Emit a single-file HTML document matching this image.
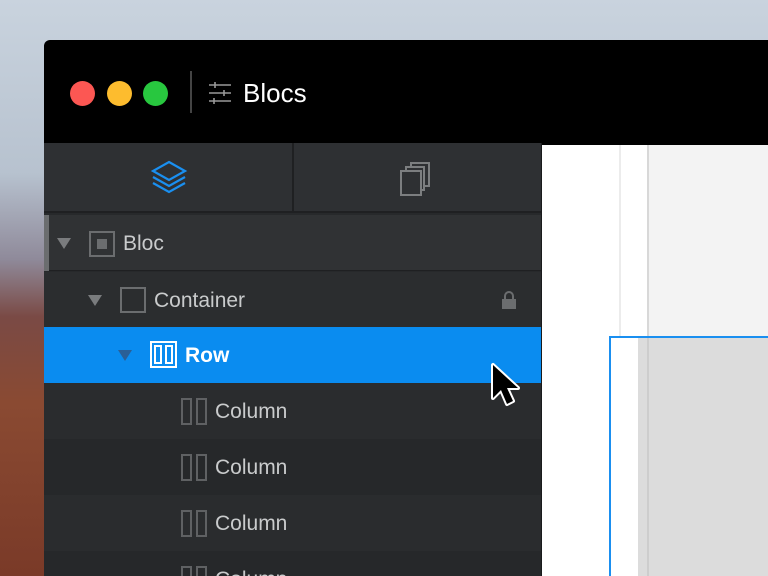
<!DOCTYPE html>
<html><head><style>
*{margin:0;padding:0;box-sizing:border-box}
html,body{width:768px;height:576px;overflow:hidden}
body{position:relative;font-family:"Liberation Sans",sans-serif;
background:linear-gradient(180deg,#c9d3de 0%,#b7c2cf 30%,#8f8a9a 45%,#7a4a45 55%,#8a4a32 70%,#7a3a28 100%)}
.win{position:absolute;left:44px;top:40px;width:724px;height:536px;background:#000;border-radius:6px 0 0 0;overflow:hidden}
.dot{position:absolute;top:41px;width:25px;height:25px;border-radius:50%}
.side{position:absolute;left:0;top:103px;width:497px;height:433px;background:#27292b;overflow:hidden}
.tabs{height:70px;background:#2e3033;border-bottom:2px solid #1f2022;position:relative}
.row{position:absolute;left:0;width:497px;height:56px;color:#c9cbcc;font-size:21px}
.row span.t{position:absolute;top:17px}
.tri{position:absolute;width:0;height:0;border-left:7px solid transparent;border-right:7px solid transparent;border-top:11px solid #7a7c7e;top:23px}
.canvas{position:absolute;left:498px;top:105px;width:226px;height:431px;background:#fff;overflow:hidden}
</style></head><body>
<div class="win">
 <div class="dot" style="left:26px;background:#fc5753"></div>
 <div class="dot" style="left:63px;background:#fdbc2e"></div>
 <div class="dot" style="left:99px;background:#28c73f"></div>
 <div style="position:absolute;left:146px;top:31px;width:2px;height:42px;background:#444"></div>
 <svg style="position:absolute;left:164px;top:41px" width="24" height="24" viewBox="0 0 24 24" stroke="#999" stroke-width="1.6"><path d="M1 4H23M1 12H23M1 20H23"/><path d="M7 1V7M16 9V15M6 17V23" stroke-width="1.6"/></svg>
 <div style="position:absolute;left:199px;top:38px;color:#fff;font-size:26px">Blocs</div>
 <div class="side">
  <div class="tabs">
   <div style="position:absolute;left:248px;top:0;width:2px;height:70px;background:#1f2022"></div>
   <svg style="position:absolute;left:106px;top:16px" width="38" height="38" viewBox="0 0 38 38" fill="none" stroke="#1a8ff0" stroke-width="2.2"><path d="M19 3L35 12L19 21L3 12Z"/><path d="M3 18L19 27L35 18"/><path d="M3 24L19 33L35 24"/></svg>
   <svg style="position:absolute;left:354px;top:18px" width="34" height="36" viewBox="0 0 34 36" fill="none" stroke="#7c7e80" stroke-width="2"><rect x="3" y="10" width="20" height="24"/><path d="M8 10V6H26V29H23M13 6V2H31V25H26"/></svg>
  </div>
  <div class="row" style="top:72px;background:#303234;border-bottom:1px solid #1f2022">
   <div style="position:absolute;left:0;top:0;width:5px;height:56px;background:#6b6d6f"></div>
   <div class="tri" style="left:13px"></div>
   <div style="position:absolute;left:45px;top:16px;width:26px;height:26px;border:2px solid #6b6d6f"></div>
   <div style="position:absolute;left:53px;top:24px;width:10px;height:10px;background:#6b6d6f"></div>
   <span class="t" style="left:79px">Bloc</span>
  </div>
  <div class="row" style="top:129px;background:#2b2d2f">
   <div class="tri" style="left:44px"></div>
   <div style="position:absolute;left:76px;top:15px;width:26px;height:26px;border:2px solid #6b6d6f"></div>
   <span class="t" style="left:110px">Container</span>
   <svg style="position:absolute;left:457px;top:18px" width="16" height="20" viewBox="0 0 16 20"><path d="M4 9V6a4 4 0 0 1 8 0v3" fill="none" stroke="#6b6d6f" stroke-width="2"/><rect x="1" y="9" width="14" height="10" fill="#6b6d6f"/></svg>
  </div>
  <div class="row" style="top:184px;background:#0a8cf0;color:#fff;font-weight:bold">
   <div class="tri" style="left:74px;border-top-color:#2a5f96"></div>
   <div style="position:absolute;left:106px;top:14px;width:27px;height:27px;border:2px solid #fff"></div>
   <div style="position:absolute;left:110px;top:18px;width:8px;height:19px;border:2px solid #fff"></div>
   <div style="position:absolute;left:121px;top:18px;width:8px;height:19px;border:2px solid #fff"></div>
   <span class="t" style="left:141px">Row</span>
  </div>
  <div class="row" style="top:240px;background:#2a2c2e"><div style="position:absolute;left:137px;top:15px;width:11px;height:27px;border:2px solid #5f6163"></div><div style="position:absolute;left:152px;top:15px;width:11px;height:27px;border:2px solid #5f6163"></div><span class="t" style="left:171px">Column</span></div>
  <div class="row" style="top:296px;background:#26282a"><div style="position:absolute;left:137px;top:15px;width:11px;height:27px;border:2px solid #5f6163"></div><div style="position:absolute;left:152px;top:15px;width:11px;height:27px;border:2px solid #5f6163"></div><span class="t" style="left:171px">Column</span></div>
  <div class="row" style="top:352px;background:#2a2c2e"><div style="position:absolute;left:137px;top:15px;width:11px;height:27px;border:2px solid #5f6163"></div><div style="position:absolute;left:152px;top:15px;width:11px;height:27px;border:2px solid #5f6163"></div><span class="t" style="left:171px">Column</span></div>
  <div class="row" style="top:408px;background:#26282a"><div style="position:absolute;left:137px;top:15px;width:11px;height:27px;border:2px solid #5f6163"></div><div style="position:absolute;left:152px;top:15px;width:11px;height:27px;border:2px solid #5f6163"></div><span class="t" style="left:171px">Column</span></div>
 </div>
 <div style="position:absolute;left:497px;top:103px;width:1px;height:433px;background:#1a1b1c"></div>
 <div class="canvas">
  <div style="position:absolute;left:77px;top:0;width:2px;height:431px;background:#ececec"></div>
  <div style="position:absolute;left:105px;top:0;width:2px;height:431px;background:#d8d8d8"></div>
  <div style="position:absolute;left:107px;top:0;width:119px;height:431px;background:#f3f3f3"></div>
  <div style="position:absolute;left:67px;top:191px;width:170px;height:250px;border:2px solid #1a8ff0;background:#fff">
   <div style="position:absolute;left:27px;top:0;width:150px;height:250px;background:#dcdcdc"></div>
   <div style="position:absolute;left:36px;top:0;width:2px;height:250px;background:#cdcdcd"></div>
  </div>
 </div>
</div>
<svg style="position:absolute;left:490px;top:362px" width="34" height="46" viewBox="0 0 34 46">
<path d="M3 3V36L11 28L17 42L23 39L17 26H28Z" fill="#fff" stroke="#fff" stroke-width="4" stroke-linejoin="round"/>
<path d="M3 3V36L11 28L17 42L23 39L17 26H28Z" fill="#000" stroke="none"/>
</svg>
</body></html>
